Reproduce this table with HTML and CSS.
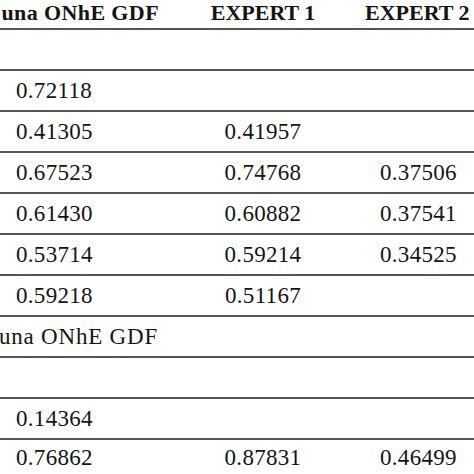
FILE: index.html
```html
<!DOCTYPE html>
<html>
<head>
<meta charset="utf-8">
<link rel="stylesheet" href="styles.css">
</head>
<body>
<div class="table">
  <div class="row head">
    <div class="cell label">una ONhE GDF</div>
    <div class="cell c">EXPERT 1</div>
    <div class="cell c">EXPERT 2</div>
  </div>
  <div class="row"><div class="cell"></div><div class="cell c"></div><div class="cell c"></div></div>
  <div class="row"><div class="cell num">0.72118</div><div class="cell c"></div><div class="cell c"></div></div>
  <div class="row"><div class="cell num">0.41305</div><div class="cell c">0.41957</div><div class="cell c"></div></div>
  <div class="row"><div class="cell num">0.67523</div><div class="cell c">0.74768</div><div class="cell c">0.37506</div></div>
  <div class="row"><div class="cell num">0.61430</div><div class="cell c">0.60882</div><div class="cell c">0.37541</div></div>
  <div class="row"><div class="cell num">0.53714</div><div class="cell c">0.59214</div><div class="cell c">0.34525</div></div>
  <div class="row"><div class="cell num">0.59218</div><div class="cell c">0.51167</div><div class="cell c"></div></div>
  <div class="row"><div class="cell label">una ONhE GDF</div><div class="cell c"></div><div class="cell c"></div></div>
  <div class="row"><div class="cell"></div><div class="cell c"></div><div class="cell c"></div></div>
  <div class="row"><div class="cell num">0.14364</div><div class="cell c"></div><div class="cell c"></div></div>
  <div class="row last"><div class="cell num">0.76862</div><div class="cell c">0.87831</div><div class="cell c">0.46499</div></div>
</div>
</body>
</html>
```
FILE: styles.css
```css
html, body {
  margin: 0;
  padding: 0;
  background: #ffffff;
  overflow: hidden;
  width: 474px;
  height: 474px;
}
.table {
  width: 474px;
  font-family: "Liberation Serif", "Times New Roman", serif;
  font-size: 23px;
  color: #141414;
}
.row {
  display: grid;
  grid-template-columns: 190px 146px 138px;
  height: 41px;
  box-sizing: border-box;
  border-bottom: 2px solid #555555;
}
.row.last {
  height: 35px;
  border-bottom: 0;
}
.cell {
  display: flex;
  align-items: center;
  white-space: nowrap;
  letter-spacing: 0.3px;
}
.num {
  padding-left: 16px;
}
.c {
  justify-content: center;
}
.row .c:last-child {
  justify-content: flex-start;
  padding-left: 44px;
}
.label {
  justify-content: flex-end;
  padding-right: 32px;
  letter-spacing: 0.8px;
}
.head {
  height: 30px;
  font-weight: bold;
  font-size: 22px;
}
.head .cell {
  padding-bottom: 6px;
  letter-spacing: 0;
}
.head .label {
  padding-right: 31px;
  letter-spacing: 0.4px;
}
.head .c:last-child {
  padding-left: 29px;
}
```
